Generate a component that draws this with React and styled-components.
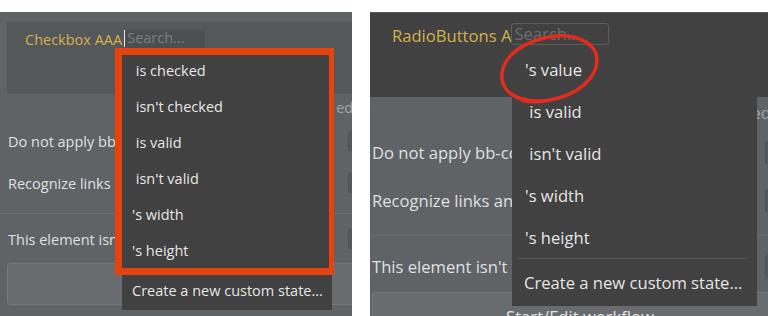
import React from "react";
import styled, { createGlobalStyle } from "styled-components";

const Global = createGlobalStyle`
  html, body { margin: 0; padding: 0; background: #ffffff; }
  body {
    width: 768px;
    height: 316px;
    overflow: hidden;
    font-family: "Open Sans", "Noto Sans", sans-serif;
  }
`;

const Page = styled.div`
  display: flex;
  gap: 18px;
  padding-top: 12px;
  height: 316px;
  box-sizing: border-box;
`;

const Panel = styled.section`
  position: relative;
  flex: none;
  width: ${(p) => p.$w}px;
  height: 304px;
  overflow: hidden;
  background: #5f6366;
`;

const Editor = styled.div`
  width: ${(p) => p.$w}px;
  display: flex;
  flex-direction: column;
  font-size: ${(p) => p.$fs}px;
`;

const Header = styled.header`
  display: flex;
  align-items: flex-start;
  box-sizing: border-box;
  height: ${(p) => p.$h}px;
  margin: ${(p) => p.$m};
  padding: ${(p) => p.$pad};
  background: ${(p) => p.$bg};
  border-top: ${(p) => p.$bt || "none"};
`;

const Name = styled.span`
  color: #d5b04a;
  white-space: nowrap;
  line-height: ${(p) => p.$lh}px;
  margin-top: ${(p) => p.$mt || 0}px;
`;

const Caret = styled.span`
  flex: none;
  width: 1px;
  height: 17px;
  margin-left: 2px;
  background: #e8e8e8;
`;

const Search = styled.span`
  flex: none;
  box-sizing: border-box;
  width: ${(p) => p.$w}px;
  height: ${(p) => p.$h}px;
  padding-left: 2px;
  line-height: ${(p) => p.$h - 2}px;
  color: ${(p) => (p.$outlined ? "#6d6d6d" : "#7b7e81")};
  background: ${(p) => (p.$outlined ? "transparent" : "#4c4f52")};
  border: ${(p) => (p.$outlined ? "1px solid #5d5d5d" : "none")};
  border-radius: ${(p) => (p.$outlined ? 3 : 0)}px;
  overflow: hidden;
  white-space: nowrap;
`;

const Row = styled.div`
  display: flex;
  align-items: center;
  justify-content: ${(p) => (p.$end ? "flex-end" : "space-between")};
  height: ${(p) => p.$h}px;
  padding: 0 ${(p) => p.$pr}px 0 ${(p) => p.$pl}px;
`;

const Label = styled.span`
  color: #dfe0e1;
  white-space: nowrap;
`;

const EditLink = styled.span`
  color: #a2a5a7;
  white-space: nowrap;
`;

const Check = styled.span`
  flex: none;
  box-sizing: border-box;
  width: ${(p) => p.$size}px;
  height: ${(p) => p.$size}px;
  background: #55585b;
  border: 1px solid #4f5255;
  border-radius: 2px;
`;

const Separator = styled.div`
  height: 1px;
  margin: ${(p) => p.$m};
  background: #6b6f72;
`;

const Button = styled.div`
  display: flex;
  align-items: center;
  justify-content: center;
  box-sizing: border-box;
  height: ${(p) => p.$h}px;
  margin: ${(p) => p.$m};
  color: #e4e4e4;
  white-space: nowrap;
  background: #686c6f;
  border: 1px solid #75797c;
  border-radius: 3px;
`;

const Menu = styled.ul`
  position: absolute;
  left: ${(p) => p.$x}px;
  top: ${(p) => p.$y}px;
  width: ${(p) => p.$w}px;
  margin: 0;
  padding: ${(p) => p.$pt}px 0 ${(p) => p.$pb}px;
  box-sizing: border-box;
  list-style: none;
  background: #414141;
  color: #e6e6e6;
  font-size: ${(p) => p.$fs}px;
`;

const Item = styled.li`
  display: flex;
  align-items: center;
  height: ${(p) => p.$h}px;
  padding-left: ${(p) => p.$pad}px;
  white-space: pre;
`;

const MenuDivider = styled.li`
  height: 1px;
  margin: ${(p) => p.$m};
  background: #5a5a5a;
`;

const Frame = styled.div`
  position: absolute;
  left: 115px;
  top: 36px;
  width: 219px;
  height: 227px;
  box-sizing: border-box;
  border: 7px solid #e5420e;
  border-right-width: 5px;
  pointer-events: none;
`;

const Scribble = styled.svg`
  position: absolute;
  left: 0;
  top: 0;
  pointer-events: none;
`;

const leftItems = [" is checked", " isn't checked", " is valid", " isn't valid", "'s width", "'s height"];
const rightItems = ["'s value", " is valid", " isn't valid", "'s width", "'s height"];

const labels = ["Do not apply bb-code", "Recognize links and emails"];

export default function App() {
  return (
    <>
      <Global />
      <Page>
        <Panel $w={352}>
          <Editor $w={374} $fs={14.5}>
            <Header $h={72} $m="10px 0 0 7px" $pad="8px 0 0 18px" $bg="#54585b">
              <Name $lh={20}>Checkbox AAA</Name>
              <Caret />
              <Search $w={80} $h={18}>Search...</Search>
            </Header>
            <Row $h={26} $pl={8} $pr={12} $end>
              <EditLink>edit</EditLink>
            </Row>
            {labels.map((l) => (
              <Row key={l} $h={42} $pl={8} $pr={6}>
                <Label>{l}</Label>
                <Check $size={20} />
              </Row>
            ))}
            <Separator $m="9px 0 4px" />
            <Row $h={42} $pl={8} $pr={6}>
              <Label>This element isn't visible on page load</Label>
              <Check $size={20} />
            </Row>
            <Button $h={42} $m="3px 6px 0 7px">Start/Edit workflow</Button>
          </Editor>
          <Menu $x={122} $y={38} $w={210} $pt={2} $pb={2} $fs={14.5}>
            {leftItems.map((t) => (
              <Item key={t} $h={36} $pad={10}>{t}</Item>
            ))}
            <MenuDivider $m="2px 8px 1px 6px" />
            <Item $h={36} $pad={10}>Create a new custom state...</Item>
          </Menu>
          <Frame />
        </Panel>

        <Panel $w={398}>
          <Editor $w={424} $fs={16.6}>
            <Header $h={85} $m="0" $pad="10px 0 0 22px" $bg="#414141" $bt="1px solid #575757">
              <Name $lh={22} $mt={2}>RadioButtons A</Name>
              <Search $w={98} $h={22} $outlined>Search...</Search>
            </Header>
            <Row $h={31} $pl={2} $pr={13} $end>
              <EditLink>edit</EditLink>
            </Row>
            {labels.map((l) => (
              <Row key={l} $h={48} $pl={2} $pr={6}>
                <Label>{l}</Label>
                <Check $size={23} />
              </Row>
            ))}
            <Separator $m="11px 0 6px" />
            <Row $h={48} $pl={2} $pr={6}>
              <Label>This element isn't visible on page load</Label>
              <Check $size={23} />
            </Row>
            <Button $h={48} $m="2px 6px 0 2px">Start/Edit workflow</Button>
          </Editor>
          <Menu $x={142} $y={35} $w={245} $pt={1} $pb={3} $fs={16.6}>
            {rightItems.map((t) => (
              <Item key={t} $h={42} $pad={13}>{t}</Item>
            ))}
            <MenuDivider $m="0 11px 2px 5px" />
            <Item $h={42} $pad={12}>Create a new custom state...</Item>
          </Menu>
          <Scribble width="398" height="304" viewBox="370 12 398 304">
            <path
              d="M 540 101 C 515 102, 500 90, 502 73 C 504 55, 525 40, 555 36 C 580 34, 597 45, 597 60 C 597 78, 578 95, 550 100 C 540 102, 530 103, 522 100"
              fill="none"
              stroke="#e32b1e"
              strokeWidth="3.5"
              strokeLinecap="round"
              strokeLinejoin="round"
            />
          </Scribble>
        </Panel>
      </Page>
    </>
  );
}
